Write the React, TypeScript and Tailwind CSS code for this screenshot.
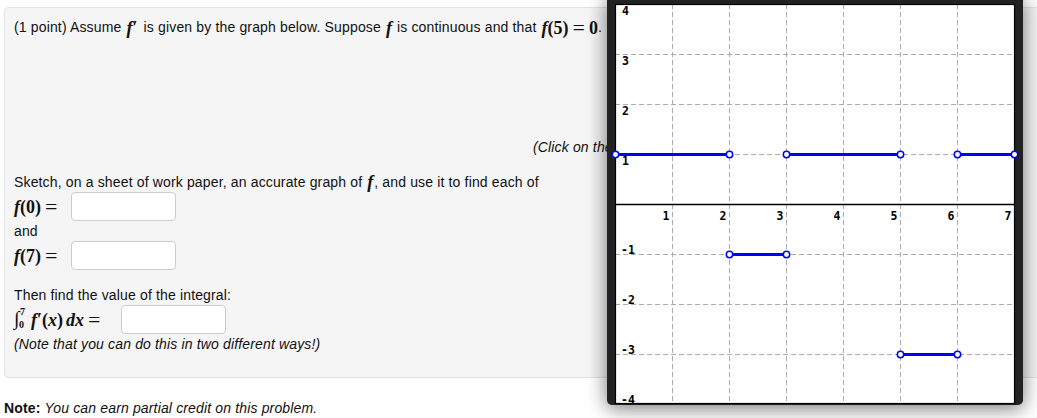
import React from "react";

const X = (x: number) => 0.5 + 57 * x;
const Y = (y: number) => 200 - 50 * y;

function Graph() {
  const segs: [number, number, number][] = [
    [0, 2, 1],
    [2, 3, -1],
    [3, 5, 1],
    [5, 6, -3],
    [6, 7, 1],
  ];
  const labelStyle = {
    fontFamily: '"DejaVu Sans Mono", monospace',
    fontWeight: 700,
    fontSize: "11.5px",
  } as const;
  return (
    <svg width={400} height={400} viewBox="0 0 400 400" style={{ overflow: "visible", display: "block" }}>
      <rect x={0} y={0} width={400} height={400} fill="#ffffff" />
      {[1, 2, 3, 4, 5, 6].map((i) => (
        <line key={"v" + i} x1={X(i)} y1={0} x2={X(i)} y2={400} stroke="#ababab" strokeWidth={1} strokeDasharray="5 3" />
      ))}
      {[3, 2, 1, -1, -2, -3].map((j) => (
        <line key={"h" + j} x1={0} y1={Y(j) + 0.5} x2={400} y2={Y(j) + 0.5} stroke="#ababab" strokeWidth={1} strokeDasharray="5 3" />
      ))}
      <line x1={0} y1={200.5} x2={400} y2={200.5} stroke="#000" strokeWidth={1.3} />
      <rect x={0.5} y={0.5} width={399} height={399} fill="none" stroke="#000" strokeWidth={1.2} />
      {[4, 3, 2, 1].map((j) => (
        <text key={"yl" + j} x={7} y={Y(j) + 10.5} style={labelStyle} fill="#000">
          {j}
        </text>
      ))}
      {[-1, -2, -3, -4].map((j) => (
        <text key={"yl" + j} x={6} y={Y(j) - 0.5} style={labelStyle} fill="#000">
          {"-" + Math.abs(j)}
        </text>
      ))}
      {[1, 2, 3, 4, 5, 6, 7].map((i) => (
        <text key={"xl" + i} x={X(i) - 3} y={215.5} textAnchor="end" style={labelStyle} fill="#000">
          {i}
        </text>
      ))}
      {segs.map(([a, b, v], k) => (
        <line key={"s" + k} x1={X(a)} y1={Y(v) + 0.5} x2={X(b)} y2={Y(v) + 0.5} stroke="#0000ff" strokeWidth={3} />
      ))}
      {segs.map(([a, b, v], k) => (
        <g key={"c" + k}>
          <circle cx={X(a)} cy={Y(v) + 0.5} r={3.2} fill="#fff" stroke="#0000ff" strokeWidth={1.5} />
          <circle cx={X(b)} cy={Y(v) + 0.5} r={3.2} fill="#fff" stroke="#0000ff" strokeWidth={1.5} />
        </g>
      ))}
    </svg>
  );
}

const serif = { fontFamily: '"Liberation Serif", "DejaVu Serif", serif', letterSpacing: 0 } as const;

function MF({ children }: { children: React.ReactNode }) {
  return <span className="italic font-bold">{children}</span>;
}

function Eq() {
  return <span className="mx-[4px] font-normal text-[22px] leading-none">=</span>;
}

function Input() {
  return <div className="h-[29px] w-[105px] rounded-[4px] border border-[#cccccc] bg-white shrink-0" />;
}

export default function App() {
  return (
    <div
      className="relative w-[1037px] h-[418px] overflow-hidden bg-white text-[14px] text-[#111] tracking-[0.15px]"
      style={{ fontFamily: '"Liberation Sans", Arial, sans-serif' }}
    >
      <div className="ml-[4px] mt-[7px] w-[1080px] rounded-[4px] border border-[#e3e3e3] bg-[#f5f5f5] pl-[9px]">
        <div className="h-[39px] flex items-center whitespace-nowrap">
          <span>(1 point) Assume&nbsp;</span>
          <span style={serif} className="text-[18px] leading-none ml-[1px] mr-[2px]">
            <MF>f</MF>
            <span className="font-bold">′</span>
          </span>
          <span>&nbsp;is given by the graph below. Suppose&nbsp;</span>
          <span style={serif} className="text-[18px] leading-none ml-[1px] mr-[1px]">
            <MF>f</MF>
          </span>
          <span>&nbsp;is continuous and that&nbsp;</span>
          <span style={serif} className="text-[18px] leading-none font-bold ml-[1px] flex items-center">
            <MF>f</MF>(5)<Eq />0
          </span>
          <span>.</span>
        </div>
        <div className="h-[91px]" />
        <div className="h-[19px] flex items-center pl-[519px] italic whitespace-nowrap">
          (Click on the graph to see a larger version)
        </div>
        <div className="h-[15px]" />
        <div className="h-[20px] flex items-center whitespace-nowrap">
          <span>Sketch, on a sheet of work paper, an accurate graph of&nbsp;</span>
          <span style={serif} className="text-[18px] leading-none ml-[1px] mr-[1px]">
            <MF>f</MF>
          </span>
          <span>, and use it to find each of</span>
        </div>
        <div className="h-[29px] flex items-center">
          <div style={serif} className="w-[57px] text-[18px] leading-none font-bold whitespace-nowrap flex items-center">
            <MF>f</MF>(0)<Eq />
          </div>
          <Input />
        </div>
        <div className="h-[20px] flex items-center">and</div>
        <div className="h-[29px] flex items-center">
          <div style={serif} className="w-[57px] text-[18px] leading-none font-bold whitespace-nowrap flex items-center">
            <MF>f</MF>(7)<Eq />
          </div>
          <Input />
        </div>
        <div className="h-[15px]" />
        <div className="h-[20px] flex items-center">Then find the value of the integral:</div>
        <div className="h-[29px] flex items-center">
          <div style={serif} className="w-[107px] text-[18px] leading-none font-bold whitespace-nowrap flex items-center">
            <span className="relative inline-block w-[15px] h-[20px]">
              <span className="absolute left-0 top-[-2px] text-[20px] font-normal">∫</span>
              <span className="absolute left-[6px] top-[-3px] text-[10px]">7</span>
              <span className="absolute left-[5px] top-[10px] text-[10px]">0</span>
            </span>
            <span className="ml-[2px] flex items-center">
              <MF>f</MF>′(<MF>x</MF>)<span className="ml-[3px]"><MF>dx</MF></span>
              <Eq />
            </span>
          </div>
          <Input />
        </div>
        <div className="h-[21px] flex items-center italic">(Note that you can do this in two different ways!)</div>
        <div className="h-[22px]" />
      </div>
      <div className="mt-[20px] h-[20px] flex items-center pl-[4px] whitespace-nowrap">
        <span className="font-bold">Note:</span>
        <span className="italic">&nbsp;You can earn partial credit on this problem.</span>
      </div>

      <div className="absolute left-[607px] top-[-4px] w-[416px] h-[409px] rounded-b-[5px] bg-[#222222] pl-[8px] pt-[8px] shadow-[0_3px_20px_rgba(0,0,0,0.55)]">
        <Graph />
      </div>
    </div>
  );
}
